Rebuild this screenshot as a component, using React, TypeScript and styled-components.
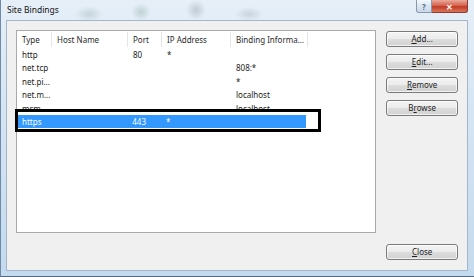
import React from 'react';
import styled, { createGlobalStyle } from 'styled-components';

const GlobalStyle = createGlobalStyle`
  html, body {
    margin: 0;
    padding: 0;
    background: #cfe0f0;
  }
  body {
    font-family: "Noto Sans", "Open Sans", "Liberation Sans", sans-serif;
  }
`;

const Window = styled.div`
  width: 474px;
  height: 277px;
  display: flex;
  flex-direction: column;
  box-sizing: border-box;
  padding: 0 6px 5px 5px;
  background:
    radial-gradient(ellipse 14px 8px at 88px 14px, rgba(90, 120, 110, 0.22), transparent),
    radial-gradient(ellipse 10px 9px at 140px 12px, rgba(60, 110, 90, 0.22), transparent),
    radial-gradient(ellipse 10px 10px at 195px 10px, rgba(90, 100, 110, 0.25), transparent),
    radial-gradient(ellipse 14px 7px at 248px 14px, rgba(90, 110, 130, 0.2), transparent),
    linear-gradient(180deg, #e6eff8 0%, #d5e5f4 40%, #c4daee 100%);
  border-left: 1px solid #6f8aa6;
  border-bottom: 1px solid #55677a;
`;

const TitleBar = styled.div`
  height: 20px;
  display: flex;
  align-items: flex-start;
  justify-content: space-between;
`;

const Title = styled.div`
  font-size: 8.5px;
  color: #111;
  margin-top: 4px;
  margin-left: 1px;
`;

const CaptionButtons = styled.div`
  display: flex;
  margin-top: 0;
  margin-right: 0;
`;

const CaptionButton = styled.div<{ $close?: boolean }>`
  width: ${p => (p.$close ? 36 : 16)}px;
  height: 13px;
  display: flex;
  align-items: center;
  justify-content: center;
  font-size: 8px;
  font-weight: bold;
  color: ${p => (p.$close ? '#fff' : '#5a6f86')};
  border: 1px solid ${p => (p.$close ? '#8b3a2f' : '#8799ad')};
  border-top: none;
  border-left: ${p => (p.$close ? 'none' : undefined)};
  border-radius: ${p => (p.$close ? '0 0 3px 0' : '0 0 0 3px')};
  background: ${p =>
    p.$close
      ? 'linear-gradient(180deg, #e9a99c 0%, #d7644f 45%, #c13d27 55%, #d9755a 100%)'
      : 'linear-gradient(180deg, #f4f8fc 0%, #dbe6f1 50%, #c9d8e8 100%)'};
  box-sizing: border-box;
`;

const Client = styled.div`
  flex: 1;
  background: #f0f0f0;
  border: 1px solid #a4b6c8;
  display: flex;
  gap: 10px;
  padding: 9px 9px 10px 9px;
`;

const ListBox = styled.div`
  position: relative;
  width: 362px;
  height: 203px;
  box-sizing: border-box;
  background: #fff;
  border: 1px solid #a9a9a9;
  font-size: 8px;
  color: #1a1a1a;
`;

const HeaderRow = styled.div`
  display: flex;
  height: 17px;
  align-items: center;
`;

const HeaderCell = styled.div<{ $w: number }>`
  width: ${p => p.$w}px;
  box-sizing: border-box;
  padding-left: 5px;
  height: 15px;
  line-height: 15px;
  border-right: 1px solid #e6e6e6;
  white-space: nowrap;
  overflow: hidden;
  color: #2a2a2a;
`;

const Row = styled.div<{ $selected?: boolean }>`
  display: flex;
  height: 13.4px;
  line-height: 13.4px;
  width: ${p => (p.$selected ? '289px' : 'auto')};
  background: ${p => (p.$selected ? '#3399ff' : 'transparent')};
  color: ${p => (p.$selected ? '#fff' : '#1a1a1a')};
`;

const Cell = styled.div<{ $w: number }>`
  width: ${p => p.$w}px;
  box-sizing: border-box;
  padding-left: 5px;
  white-space: nowrap;
  overflow: hidden;
`;

const Highlight = styled.div`
  position: absolute;
  left: -2px;
  top: 78px;
  width: 306px;
  height: 23px;
  box-sizing: border-box;
  border: 3px solid #000;
`;

const ButtonColumn = styled.div`
  width: 72px;
  display: flex;
  flex-direction: column;
  gap: 7px;
  padding-top: 1px;
`;

const Button = styled.div<{ $bottom?: boolean }>`
  height: 16px;
  box-sizing: border-box;
  border: 1px solid #7a7a7a;
  border-radius: 3px;
  background: linear-gradient(180deg, #f4f4f4 0%, #ebebeb 48%, #dddddd 52%, #d1d1d1 100%);
  box-shadow: inset 0 0 0 1px rgba(255, 255, 255, 0.7);
  font-size: 8px;
  line-height: 14px;
  text-align: center;
  color: #222;
  margin-top: ${p => (p.$bottom ? 'auto' : '0')};
`;

const Key = styled.span`
  text-decoration: underline;
`;

const cols = [35, 76, 34, 69, 77];

const rows: [string, string, string, string, string][] = [
  ['http', '', '80', '*', ''],
  ['net.tcp', '', '', '', '808:*'],
  ['net.pi...', '', '', '', '*'],
  ['net.m...', '', '', '', 'localhost'],
  ['msm...', '', '', '', 'localhost'],
];

export default function App() {
  return (
    <>
      <GlobalStyle />
      <Window>
        <TitleBar>
          <Title>Site Bindings</Title>
          <CaptionButtons>
            <CaptionButton>?</CaptionButton>
            <CaptionButton $close>✕</CaptionButton>
          </CaptionButtons>
        </TitleBar>
        <Client>
          <ListBox>
            <HeaderRow>
              {['Type', 'Host Name', 'Port', 'IP Address', 'Binding Informa...'].map((h, i) => (
                <HeaderCell key={h} $w={cols[i]}>{h}</HeaderCell>
              ))}
            </HeaderRow>
            {rows.map((r, ri) => (
              <Row key={ri}>
                {r.map((c, i) => (
                  <Cell key={i} $w={cols[i]}>{c}</Cell>
                ))}
              </Row>
            ))}
            <Row $selected>
              {['https', '', '443', '*', ''].map((c, i) => (
                <Cell key={i} $w={cols[i]}>{c}</Cell>
              ))}
            </Row>
            <Highlight />
          </ListBox>
          <ButtonColumn>
            <Button><Key>A</Key>dd...</Button>
            <Button><Key>E</Key>dit...</Button>
            <Button><Key>R</Key>emove</Button>
            <Button>B<Key>r</Key>owse</Button>
            <Button $bottom><Key>C</Key>lose</Button>
          </ButtonColumn>
        </Client>
      </Window>
    </>
  );
}
